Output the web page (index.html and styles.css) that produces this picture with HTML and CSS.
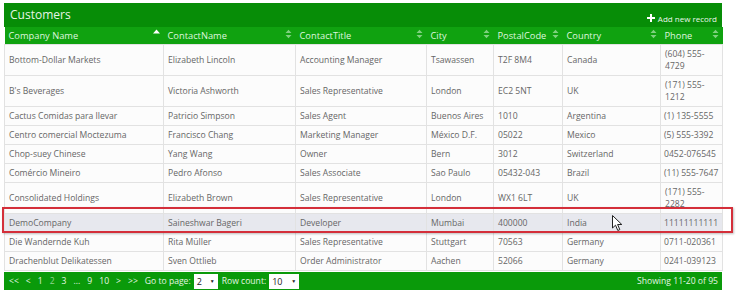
FILE: index.html
```html
<!DOCTYPE html>
<html>
<head>
<meta charset="utf-8">
<link rel="stylesheet" href="styles.css">
</head>
<body>
<div class="grid">
  <div class="titlebar">
    <span class="title">Customers</span>
    <span class="add"><svg class="plus" width="8" height="8" viewBox="0 0 8 8"><path d="M3 0h2v3h3v2H5v3H3V5H0V3h3z" fill="#fff"/></svg>Add new record</span>
  </div>
  <table class="tbl">
    <colgroup>
      <col style="width:159px"><col style="width:132px"><col style="width:131px"><col style="width:67px"><col style="width:69px"><col style="width:98px"><col style="width:62px">
    </colgroup>
    <thead>
      <tr>
        <th><span class="hl">Company Name</span><svg class="sort" width="7" height="10" viewBox="0 0 7 10"><path d="M0 4.5L3.5 0.5L7 4.5z" fill="#fff"/></svg></th>
        <th><span class="hl">ContactName</span><svg class="sort" width="7" height="10" viewBox="0 0 7 10"><path d="M0.5 4L3.5 0.8L6.5 4zM0.5 6L3.5 9.2L6.5 6z" fill="#7fd17f"/></svg></th>
        <th><span class="hl">ContactTitle</span><svg class="sort" width="7" height="10" viewBox="0 0 7 10"><path d="M0.5 4L3.5 0.8L6.5 4zM0.5 6L3.5 9.2L6.5 6z" fill="#7fd17f"/></svg></th>
        <th><span class="hl">City</span><svg class="sort" width="7" height="10" viewBox="0 0 7 10"><path d="M0.5 4L3.5 0.8L6.5 4zM0.5 6L3.5 9.2L6.5 6z" fill="#7fd17f"/></svg></th>
        <th><span class="hl">PostalCode</span><svg class="sort" width="7" height="10" viewBox="0 0 7 10"><path d="M0.5 4L3.5 0.8L6.5 4zM0.5 6L3.5 9.2L6.5 6z" fill="#7fd17f"/></svg></th>
        <th><span class="hl">Country</span><svg class="sort" width="7" height="10" viewBox="0 0 7 10"><path d="M0.5 4L3.5 0.8L6.5 4zM0.5 6L3.5 9.2L6.5 6z" fill="#7fd17f"/></svg></th>
        <th><span class="hl">Phone</span><svg class="sort" width="7" height="10" viewBox="0 0 7 10"><path d="M0.5 4L3.5 0.8L6.5 4zM0.5 6L3.5 9.2L6.5 6z" fill="#7fd17f"/></svg></th>
      </tr>
    </thead>
    <tbody>
      <tr><td>Bottom-Dollar Markets</td><td>Elizabeth Lincoln</td><td>Accounting Manager</td><td>Tsawassen</td><td>T2F 8M4</td><td>Canada</td><td>(604) 555-4729</td></tr>
      <tr><td>B's Beverages</td><td>Victoria Ashworth</td><td>Sales Representative</td><td>London</td><td>EC2 5NT</td><td>UK</td><td>(171) 555-1212</td></tr>
      <tr><td>Cactus Comidas para llevar</td><td>Patricio Simpson</td><td>Sales Agent</td><td>Buenos Aires</td><td>1010</td><td>Argentina</td><td class="nw">(1) 135-5555</td></tr>
      <tr><td>Centro comercial Moctezuma</td><td>Francisco Chang</td><td>Marketing Manager</td><td>México D.F.</td><td>05022</td><td>Mexico</td><td class="nw">(5) 555-3392</td></tr>
      <tr><td>Chop-suey Chinese</td><td>Yang Wang</td><td>Owner</td><td>Bern</td><td>3012</td><td>Switzerland</td><td class="nw">0452-076545</td></tr>
      <tr><td>Comércio Mineiro</td><td>Pedro Afonso</td><td>Sales Associate</td><td>Sao Paulo</td><td>05432-043</td><td>Brazil</td><td class="nw">(11) 555-7647</td></tr>
      <tr><td>Consolidated Holdings</td><td>Elizabeth Brown</td><td>Sales Representative</td><td>London</td><td>WX1 6LT</td><td>UK</td><td>(171) 555-2282</td></tr>
      <tr class="hover"><td>DemoCompany</td><td>Saineshwar Bageri</td><td>Developer</td><td>Mumbai</td><td>400000</td><td>India</td><td class="nw">11111111111</td></tr>
      <tr><td>Die Wandernde Kuh</td><td>Rita Müller</td><td>Sales Representative</td><td>Stuttgart</td><td>70563</td><td>Germany</td><td class="nw">0711-020361</td></tr>
      <tr><td>Drachenblut Delikatessen</td><td>Sven Ottlieb</td><td>Order Administrator</td><td>Aachen</td><td>52066</td><td>Germany</td><td class="nw">0241-039123</td></tr>
    </tbody>
  </table>
  <div class="footer">
    <div class="pager">
      <span class="pg">&lt;&lt;</span>
      <span class="pg">&lt;</span>
      <span class="pg">1</span>
      <span class="pg current">2</span>
      <span class="pg">3</span>
      <span class="pg">...</span>
      <span class="pg">9</span>
      <span class="pg">10</span>
      <span class="pg">&gt;</span>
      <span class="pg">&gt;&gt;</span>
      <span class="lbl">Go to page:</span>
      <span class="sel sel-page">2<span class="arr">&#9660;</span></span>
      <span class="lbl">Row count:</span>
      <span class="sel sel-rows">10<span class="arr">&#9660;</span></span>
    </div>
    <span class="showing">Showing 11-20 of 95</span>
  </div>
  <div class="highlight"></div>
  <svg class="cursor" width="11" height="17" viewBox="0 0 11 17"><path d="M0.5 0.5L0.5 13L3.5 10.2L5.8 15.5L7.8 14.6L5.6 9.5L9.8 9.5Z" fill="#fff" stroke="#222" stroke-width="1" stroke-linejoin="round"/></svg>
</div>
</body>
</html>
```
FILE: styles.css
```css
html, body {
  margin: 0;
  padding: 0;
  background: #ffffff;
}
body {
  font-family: "Open Sans", "Liberation Sans", sans-serif;
}
.grid {
  position: relative;
  width: 718px;
  margin: 3px 0 0 4px;
}
.titlebar {
  height: 24px;
  background: #078d07;
  display: flex;
  align-items: center;
  justify-content: space-between;
  padding: 0 5px 0 6px;
}
.title {
  color: #e6f5e6;
  font-size: 12px;
  font-weight: 400;
  margin-top: -2px;
}
.add {
  color: #eaf7ea;
  font-size: 8px;
  display: flex;
  align-items: center;
  gap: 3px;
  margin-top: 6px;
}
.tbl {
  width: 718px;
  border-collapse: collapse;
  table-layout: fixed;
}
.tbl th {
  background: #10a210;
  height: 17px;
  padding: 0 4px;
  text-align: left;
  font-weight: 400;
  font-size: 9.3px;
  color: #dff6df;
  white-space: nowrap;
}
.tbl th .hl {
  vertical-align: middle;
}
.tbl th .sort {
  float: right;
  margin-top: 1px;
}
.tbl td {
  font-size: 8.6px;
  line-height: 12px;
  color: #666666;
  padding: 3px 2px 3px 4px;
  border: 1px solid #e2e2e2;
  background: #fcfcfc;
  vertical-align: middle;
  overflow: hidden;
}
.tbl td.nw {
  white-space: nowrap;
  padding-left: 3px;
  padding-right: 0;
}
.tbl tr.hover td {
  background: #e7e8ee;
}
.footer {
  margin-top: 1px;
  height: 18px;
  background: #0a9a0a;
  display: flex;
  align-items: center;
  justify-content: space-between;
  padding: 0 4px 0 5px;
  font-size: 8.6px;
  color: #e4f6e4;
}
.pager {
  display: flex;
  align-items: center;
}
.pg {
  margin-right: 7px;
}
.pg.current {
  color: #8fd58f;
}
.lbl {
  margin-right: 3px;
}
.sel {
  background: #ffffff;
  color: #222222;
  height: 15px;
  display: flex;
  align-items: center;
  justify-content: space-between;
  padding: 0 3px 0 3px;
  font-size: 9px;
  margin-right: 4px;
}
.sel-page { width: 18px; }
.sel-rows { width: 24px; }
.arr {
  font-size: 5px;
}
.highlight {
  position: absolute;
  left: -2px;
  top: 204px;
  width: 727px;
  height: 22px;
  border: 2px solid #d42f3a;
  box-shadow: 1px 1px 2px rgba(0,0,0,0.25);
  pointer-events: none;
}
.cursor {
  position: absolute;
  left: 608px;
  top: 212px;
}
```
